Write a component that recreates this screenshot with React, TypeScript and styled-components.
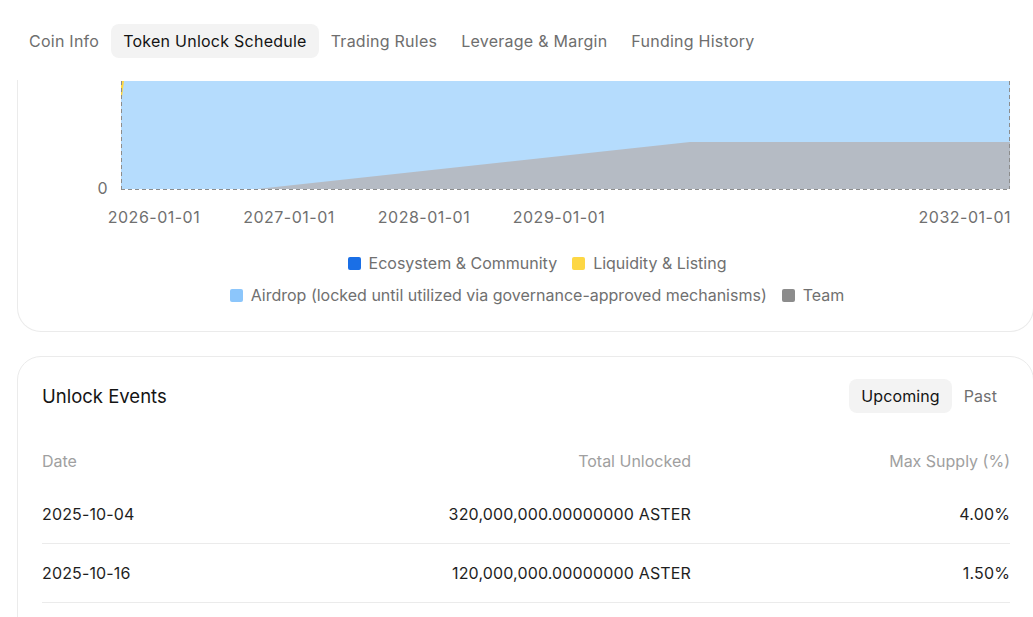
import React from 'react';
import styled, { createGlobalStyle } from 'styled-components';

interface LegendEntry {
  label: string;
  color: string;
}

interface UnlockRow {
  date: string;
  amount: string;
  share: string;
}

const tabs = ['Coin Info', 'Token Unlock Schedule', 'Trading Rules', 'Leverage & Margin', 'Funding History'];

const legendRows: LegendEntry[][] = [
  [
    { label: 'Ecosystem & Community', color: '#1a6fe6' },
    { label: 'Liquidity & Listing', color: '#fdd744' },
  ],
  [
    { label: 'Airdrop (locked until utilized via governance-approved mechanisms)', color: '#8cc6fb' },
    { label: 'Team', color: '#8c8c8c' },
  ],
];

const unlockRows: UnlockRow[] = [
  { date: '2025-10-04', amount: '320,000,000.00000000 ASTER', share: '4.00%' },
  { date: '2025-10-16', amount: '120,000,000.00000000 ASTER', share: '1.50%' },
];

// x positions inside the chart svg (page x minus 42)
const xTicks = [
  { label: '2026-01-01', x: 112, anchor: 'middle' },
  { label: '2027-01-01', x: 247, anchor: 'middle' },
  { label: '2028-01-01', x: 382, anchor: 'middle' },
  { label: '2029-01-01', x: 517, anchor: 'middle' },
  { label: '2032-01-01', x: 969, anchor: 'end' },
];

const UnlockChart = () => (
  <ChartSvg width={968} height={156} viewBox="0 0 968 156">
    <rect x={79} y={0} width={889} height={108} fill="#b5dcfd" />
    <polygon points="79,0 82,0 80,16 79,16" fill="#fdd744" />
    <polygon points="215,108 648,61 968,61 968,108" fill="#b5bbc4" />
    <line x1={79.5} y1={0} x2={79.5} y2={108} stroke="#8c8c8c" strokeDasharray="4 3" />
    <line x1={967.5} y1={0} x2={967.5} y2={108} stroke="#8c8c8c" strokeDasharray="4 3" />
    <line x1={79} y1={108.5} x2={968} y2={108.5} stroke="#8c8c8c" strokeDasharray="4 3" />
    <AxisText x={66} y={113} textAnchor="end">
      0
    </AxisText>
    {xTicks.map((t) => (
      <AxisText key={t.label} x={t.x} y={142} textAnchor={t.anchor}>
        {t.label}
      </AxisText>
    ))}
  </ChartSvg>
);

export default function App() {
  return (
    <>
      <GlobalStyle />
      <Page>
        <TabBar>
          {tabs.map((t) => (
            <Tab key={t} $active={t === 'Token Unlock Schedule'}>
              {t}
            </Tab>
          ))}
        </TabBar>

        <ChartCard>
          <UnlockChart />
          <Legend>
            {legendRows.map((row, i) => (
              <LegendRow key={i}>
                {row.map((entry) => (
                  <LegendItem key={entry.label}>
                    <Swatch $color={entry.color} />
                    {entry.label}
                  </LegendItem>
                ))}
              </LegendRow>
            ))}
          </Legend>
        </ChartCard>

        <EventsCard>
          <EventsHeader>
            <Title>Unlock Events</Title>
            <Toggle>
              <ToggleButton $active>Upcoming</ToggleButton>
              <ToggleButton>Past</ToggleButton>
            </Toggle>
          </EventsHeader>
          <Table>
            <HeadRow>
              <Cell>Date</Cell>
              <Cell $right>Total Unlocked</Cell>
              <Cell $right>Max Supply (%)</Cell>
            </HeadRow>
            {unlockRows.map((r) => (
              <BodyRow key={r.date}>
                <Cell>{r.date}</Cell>
                <Cell $right>{r.amount}</Cell>
                <Cell $right>{r.share}</Cell>
              </BodyRow>
            ))}
          </Table>
        </EventsCard>
      </Page>
    </>
  );
}

const GlobalStyle = createGlobalStyle`
  body {
    margin: 0;
    background: #ffffff;
    font-family: Inter, "Liberation Sans", sans-serif;
    overflow: hidden;
  }
`;

const Page = styled.div`
  width: 1033px;
  height: 617px;
  overflow: hidden;
  padding-left: 17px;
  box-sizing: border-box;
`;

const TabBar = styled.div`
  display: flex;
  align-items: center;
  height: 80px;
  padding-top: 1px;
  box-sizing: border-box;
`;

const Tab = styled.div<{ $active?: boolean }>`
  height: 34px;
  display: flex;
  align-items: center;
  padding: 0 12px;
  border-radius: 8px;
  font-size: 16px;
  letter-spacing: 0.25px;
  color: ${(p) => (p.$active ? '#141414' : '#6e6e6e')};
  background: ${(p) => (p.$active ? '#f3f3f3' : 'transparent')};
  white-space: nowrap;
`;

const ChartCard = styled.div`
  width: 1017px;
  box-sizing: border-box;
  border: 1px solid #ebebeb;
  border-top: none;
  border-radius: 0 0 24px 24px;
  padding: 1px 23px 20px 24px;
`;

const ChartSvg = styled.svg`
  display: block;
`;

const AxisText = styled.text`
  font-family: Inter, "Liberation Sans", sans-serif;
  font-size: 16px;
  letter-spacing: 0.5px;
  fill: #707070;
`;

const Legend = styled.div`
  display: flex;
  flex-direction: column;
  margin-top: 10px;
  padding-left: 22px;
`;

const LegendRow = styled.div`
  display: flex;
  justify-content: center;
  align-items: center;
  gap: 15px;
  height: 32px;
`;

const LegendItem = styled.div`
  display: flex;
  align-items: center;
  gap: 8px;
  font-size: 16px;
  color: #707070;
  white-space: nowrap;
`;

const Swatch = styled.span<{ $color: string }>`
  width: 13px;
  height: 13px;
  border-radius: 2px;
  background: ${(p) => p.$color};
`;

const EventsCard = styled.div`
  width: 1017px;
  box-sizing: border-box;
  margin-top: 24px;
  border: 1px solid #ebebeb;
  border-radius: 24px;
  padding: 22px 23px 40px 24px;
`;

const EventsHeader = styled.div`
  display: flex;
  align-items: center;
  justify-content: space-between;
  height: 34px;
`;

const Title = styled.div`
  font-size: 18.5px;
  font-weight: 400;
  color: #141414;
`;

const Toggle = styled.div`
  display: flex;
  align-items: center;
  margin-right: 1px;
`;

const ToggleButton = styled.div<{ $active?: boolean }>`
  height: 34px;
  display: flex;
  align-items: center;
  padding: 0 12px;
  border-radius: 8px;
  font-size: 16px;
  letter-spacing: 0.1px;
  color: ${(p) => (p.$active ? '#141414' : '#707070')};
  background: ${(p) => (p.$active ? '#f3f3f3' : 'transparent')};
`;

const Table = styled.div`
  margin-top: 24px;
`;

const HeadRow = styled.div`
  display: grid;
  grid-template-columns: 1fr 1fr 319px;
  align-items: center;
  height: 48px;
  color: #a0a0a0;
  font-size: 16px;
`;

const BodyRow = styled.div`
  display: grid;
  grid-template-columns: 1fr 1fr 319px;
  align-items: center;
  height: 58px;
  border-bottom: 1px solid #ebebeb;
  color: #1e1e1e;
  font-size: 16px;
  letter-spacing: 0.15px;
`;

const Cell = styled.div<{ $right?: boolean }>`
  text-align: ${(p) => (p.$right ? 'right' : 'left')};
  white-space: nowrap;
`;
